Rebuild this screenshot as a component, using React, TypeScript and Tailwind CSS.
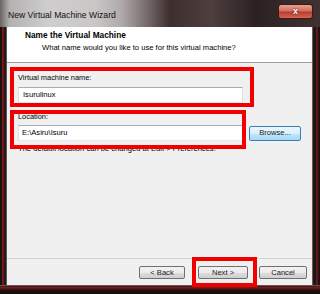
import React from "react";

function Btn({ children, w, blue }: { children: React.ReactNode; w: string; blue?: boolean }) {
  return (
    <div
      className={
        "flex items-center justify-center rounded-[2px] border text-[7.6px] leading-none text-[#1a1a1a] " +
        w +
        (blue
          ? " h-[15px] border-[#3c7fb1] bg-[linear-gradient(to_bottom,#eaf6fd_0%,#d9f0fc_50%,#bee6fd_51%,#a7d9f5_100%)]"
          : " h-[13px] border-[#707070] bg-[linear-gradient(to_bottom,#f2f2f2_0%,#ebebeb_50%,#dddddd_51%,#cfcfcf_100%)]")
      }
    >
      {children}
    </div>
  );
}

export default function App() {
  return (
    <div className="relative flex h-[294px] w-[320px] flex-col overflow-hidden bg-[#2a1b1b] font-['Liberation_Sans',Arial,sans-serif]">
      {/* Title bar */}
      <div className="flex h-[27px] shrink-0 items-start bg-[linear-gradient(to_right,#6a6464_0%,#b4b1b1_3%,#cfcdcd_15%,#c9c6c6_30%,#b0aaaa_38%,#7d7272_45%,#3e2f2f_53%,#4e3e3e_66%,#2c2121_80%,#3f3232_100%)]">
        <div className="pl-[8px] pt-[10px] text-[8.6px] leading-[10px] text-[#111]">New Virtual Machine Wizard</div>
        <div className="ml-auto mr-[7px] mt-[4px] flex h-[15px] w-[35px] items-center justify-center rounded-[3px] border border-[#4a1410] bg-[linear-gradient(to_bottom,#e3a092_0%,#d07060_45%,#b93a2e_55%,#cf6a57_100%)] text-[9px] font-bold leading-none text-white [text-shadow:0_0_2px_#300]">
          x
        </div>
      </div>

      {/* Middle */}
      <div className="flex flex-1">
        <div className="w-[7px] bg-[linear-gradient(to_right,#1a1010_0%,#1a1010_25%,#7a1c1c_35%,#6a1818_50%,#241616_60%,#2a1c1c_85%,#8a8a8a_100%)]" />
        <div className="flex w-[305px] flex-col bg-[#f0f0f0]">
          {/* Header */}
          <div className="h-[36px] border-b border-[#a0a0a0] bg-white">
            <div className="pl-[18px] pt-[3px] text-[8.3px] font-bold leading-[10px] text-black">Name the Virtual Machine</div>
            <div className="mt-[3px] pl-[35px] text-[7.6px] leading-[10px] text-black">
              What name would you like to use for this virtual machine?
            </div>
          </div>
          {/* Body */}
          <div className="flex flex-1 flex-col pl-[11px]">
            <div className="mt-[10px] text-[7.4px] leading-[10px] text-black">Virtual machine name:</div>
            <div className="mt-[4px] flex h-[16px] w-[225px] items-center border border-[#abadb3] border-b-[#e3e9ef] border-x-[#dbdfe6] bg-white pl-[4px] text-[7.6px] text-black">
              Isurulinux
            </div>
            <div className="mt-[9px] text-[7.4px] leading-[10px] text-black">Location:</div>
            <div className="mt-[3px] flex items-center gap-[6px]">
              <div className="flex h-[16px] w-[225px] items-center border border-[#abadb3] border-b-[#e3e9ef] border-x-[#dbdfe6] bg-white pl-[3px] text-[7.6px] text-black">
                E:\Asiru\Isuru
              </div>
              <Btn w="w-[52px]" blue>
                Browse...
              </Btn>
            </div>
            <div className="mt-[3px] text-[7.6px] leading-[10px] text-black">
              The default location can be changed at Edit &gt; Preferences.
            </div>
          </div>
          {/* Footer */}
          <div className="flex h-[27px] items-start justify-end border-t border-[#d2d2d2] pr-[5px] pt-[7px]">
            <Btn w="w-[46px]">&lt; Back</Btn>
            <div className="ml-[13px]">
              <Btn w="w-[50px]">Next &gt;</Btn>
            </div>
            <div className="ml-[11px]">
              <Btn w="w-[48px]">Cancel</Btn>
            </div>
          </div>
        </div>
        <div className="w-[8px] bg-[linear-gradient(to_right,#8a8a8a_0%,#2a1c1c_15%,#121010_40%,#7a1c1c_60%,#5a1616_70%,#1a1010_85%)]" />
      </div>
      <div className="h-[9px] shrink-0 bg-[linear-gradient(to_bottom,#8a8a8a_0%,#3a1a1a_12%,#7a1c1c_30%,#241212_55%,#120c0c_100%)]" />

      {/* Red highlight annotations */}
      <div className="pointer-events-none absolute left-[10px] top-[67px] h-[40px] w-[244px] border-4 border-[#f20000]" />
      <div className="pointer-events-none absolute left-[10px] top-[110px] h-[39px] w-[236px] border-4 border-[#f20000]" />
      <div className="pointer-events-none absolute left-[192px] top-[257px] h-[30px] w-[65px] border-4 border-[#f20000]" />
    </div>
  );
}
